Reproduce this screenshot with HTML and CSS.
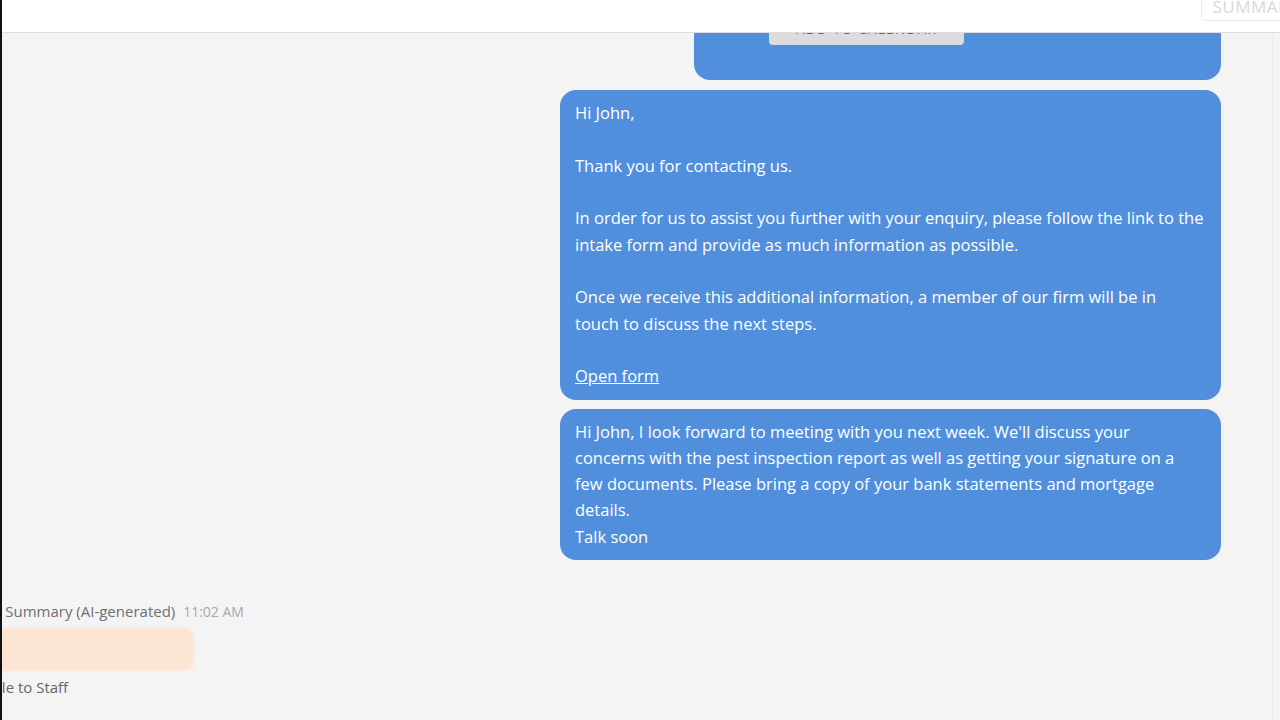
FILE: index.html
```html
<!DOCTYPE html>
<html lang="en">
<head>
  <meta charset="UTF-8" />
  <meta name="viewport" content="width=device-width, initial-scale=1.0" />
  <title>Conversation</title>
  <link rel="stylesheet" href="styles.css">
</head>
<body>

  <header class="topbar">
    <button class="summary-btn">SUMMARY</button>
  </header>

  <main class="chat">
    <div class="bubble out first">
      <p>Your appointment has been booked.</p>
      <button class="cal-btn">ADD TO CALENDAR</button>
    </div>

    <div class="bubble out">
      <p>Hi John,</p>
      <p>Thank you for contacting us.</p>
      <p>In order for us to assist you further with your enquiry, please follow the link to the<br>intake form and provide as much information as possible.</p>
      <p>Once we receive this additional information, a member of our firm will be in<br>touch to discuss the next steps.</p>
      <p><a href="#">Open form</a></p>
    </div>

    <div class="bubble out">
      Hi John, I look forward to meeting with you next week. We'll discuss your<br>
      concerns with the pest inspection report as well as getting your signature on a<br>
      few documents. Please bring a copy of your bank statements and mortgage<br>
      details.<br>
      Talk soon
    </div>

    <div class="note">
      <div class="note-meta">
        <span class="note-title">Chat Summary (AI-generated)</span>
        <span class="note-time">11:02 AM</span>
      </div>
      <div class="note-body"></div>
      <div class="note-visibility">Visible to Staff</div>
    </div>
  </main>

</body>
</html>
```

FILE: styles.css
```css
* {
  box-sizing: border-box;
}

html, body {
  height: 100%;
}

body {
  font-family: 'Open Sans', 'Liberation Sans', sans-serif;
  margin: 0;
  background: #f4f4f4;
  border-left: 2px solid #111;
  overflow: hidden;
  display: flex;
  flex-direction: column;
}

.topbar {
  height: 33px;
  flex-shrink: 0;
  background: #fff;
  border-bottom: 1px solid #dedede;
  display: flex;
  justify-content: flex-end;
  overflow: hidden;
  position: relative;
  z-index: 2;
}

.summary-btn {
  margin-top: -8px;
  margin-right: -30px;
  height: 29px;
  padding: 0 10px;
  background: #fff;
  border: 1px solid #ececec;
  border-radius: 3px;
  color: #d8d8d8;
  font-family: 'Open Sans', sans-serif;
  font-size: 17px;
  letter-spacing: 0.5px;
}

.chat {
  flex: 1;
  overflow: hidden;
  display: flex;
  flex-direction: column;
  border-right: 1px solid #ebebeb;
  margin-right: 7px;
  padding-right: 51px;
}

.chat > * {
  flex-shrink: 0;
}

.bubble {
  background: #518fdc;
  color: #fff;
  font-size: 16.5px;
  line-height: 26.3px;
  padding: 10px 15px;
  border-radius: 16px;
  margin-bottom: 9px;
  white-space: nowrap;
}

.bubble p {
  margin: 0 0 26.3px;
}

.bubble p:last-child {
  margin-bottom: 0;
}

.bubble a {
  color: #fff;
}

.out {
  align-self: flex-end;
  width: 661px;
}

.first {
  width: 527px;
  margin-top: -64px;
  margin-bottom: 10px;
  padding-bottom: 35px;
}

.first p {
  margin: 0;
}

.cal-btn {
  display: block;
  margin: 8px 0 0 60px;
  width: 195px;
  height: 32px;
  padding-bottom: 3px;
  background: #dcdcdc;
  border: none;
  border-radius: 4px;
  color: #666;
  font-family: 'Open Sans', sans-serif;
  font-size: 14px;
  letter-spacing: 1px;
}

.note {
  margin-top: 32px;
  margin-left: -33px;
}

.note-meta {
  line-height: 20px;
  font-size: 15px;
  color: #6f6f6f;
}

.note-time {
  margin-left: 4px;
  font-size: 14px;
  color: #a9a9a9;
}

.note-body {
  margin-top: 6px;
  width: 225px;
  height: 43px;
  background: #fde5d3;
  border-radius: 10px;
  filter: blur(1px);
}

.note-visibility {
  margin-top: 6px;
  line-height: 20px;
  font-size: 15px;
  color: #666;
}
```
